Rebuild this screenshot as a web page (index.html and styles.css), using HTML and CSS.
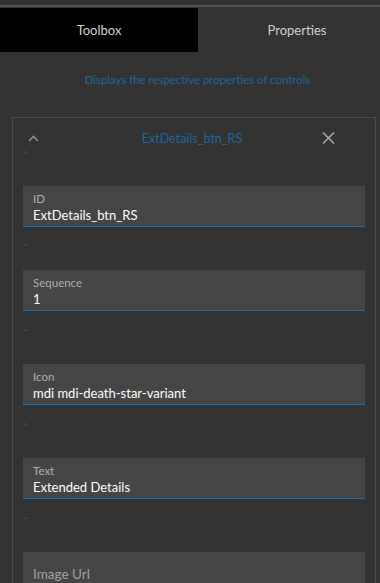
FILE: index.html
```html
<!DOCTYPE html>
<html>
<head>
<meta charset="utf-8">
<link rel="stylesheet" href="styles.css">
</head>
<body>
<div class="topbar"></div>
<div class="tabs">
  <div class="tab tab-active">Toolbox</div>
  <div class="tab">Properties</div>
</div>
<div class="subtitle">Displays the respective properties of controls</div>
<div class="separator"></div>
<div class="card">
  <div class="card-header">
    <svg class="chev" width="11" height="7" viewBox="0 0 11 7"><path d="M1 6 L5.5 1.5 L10 6" fill="none" stroke="#7595b0" stroke-width="1.6"/></svg>
    <div class="card-title">ExtDetails_btn_RS</div>
    <svg class="close" width="13" height="12" viewBox="0 0 13 12"><path d="M1 0.5 L12 11.5 M12 0.5 L1 11.5" fill="none" stroke="#a9a9a9" stroke-width="1.5"/></svg>
  </div>
  <div class="gap gap-head"><span class="tick">`</span></div>
  <div class="field">
    <div class="label">ID</div>
    <div class="value">ExtDetails_btn_RS</div>
  </div>
  <div class="gap gap-short"><span class="tick">`</span></div>
  <div class="field">
    <div class="label">Sequence</div>
    <div class="value">1</div>
  </div>
  <div class="gap"><span class="tick">`</span></div>
  <div class="field">
    <div class="label">Icon</div>
    <div class="value">mdi mdi-death-star-variant</div>
  </div>
  <div class="gap"><span class="tick">`</span></div>
  <div class="field">
    <div class="label">Text</div>
    <div class="value">Extended Details</div>
  </div>
  <div class="gap"><span class="tick">`</span></div>
  <div class="field field-empty">
    <div class="placeholder">Image Url</div>
  </div>
</div>
</body>
</html>
```

FILE: styles.css
```css
html, body {
  margin: 0;
  padding: 0;
  background: #333333;
  font-family: "Lato", "Noto Sans", sans-serif;
  overflow: hidden;
  height: 583px;
}
.topbar {
  height: 5px;
  border-bottom: 2px solid #555555;
  margin-bottom: 1px;
}
.tabs {
  display: flex;
  height: 44px;
  width: 396px;
}
.tab {
  display: flex;
  align-items: center;
  justify-content: center;
  color: #d0d0d0;
  font-size: 13px;
  flex: 0 0 198px;
}
.tab-active {
  background: #000000;
}
.subtitle {
  text-align: center;
  color: #1f66a0;
  font-size: 11.4px;
  line-height: 14px;
  padding: 21px 0 0 15px;
  height: 26px;
}
.separator {
  margin: 0 5px 0 12px;
  border-top: 1px solid #393939;
}
.card {
  margin: 17px 4px 0 12px;
  border: 1px solid #4a4a4a;
  border-bottom: none;
  padding: 0 10px;
  height: 600px;
}
.card-header {
  display: flex;
  align-items: center;
  height: 40px;
  padding: 0 30px 0 5px;
}
.chev {
  flex: 0 0 auto;
}
.card-title {
  flex: 1;
  text-align: center;
  color: #1f66a0;
  font-size: 12.5px;
  padding-left: 23px;
}
.close {
  flex: 0 0 auto;
}
.gap {
  box-sizing: border-box;
  height: 53px;
  padding-top: 17px;
}
.gap-short {
  height: 43px;
  padding-top: 16px;
}
.gap-head {
  height: 36px;
  margin-top: -8px;
  padding-top: 0;
}
.tick {
  display: block;
  color: #777777;
  font-size: 10px;
  line-height: 10px;
  padding-left: 1px;
}
.field {
  background: #454545;
  border-bottom: 1px solid #1273bd;
  height: 41px;
  padding: 6px 10px 0 10px;
  box-sizing: border-box;
}
.label {
  color: #b0b0b0;
  font-size: 11.5px;
  line-height: 14px;
}
.value {
  color: #ffffff;
  font-size: 13px;
  line-height: 18px;
}
.field-empty {
  border-bottom: none;
  padding-top: 13px;
  height: 60px;
}
.placeholder {
  color: #a0a0a0;
  font-size: 13.5px;
  line-height: 18px;
}
```
